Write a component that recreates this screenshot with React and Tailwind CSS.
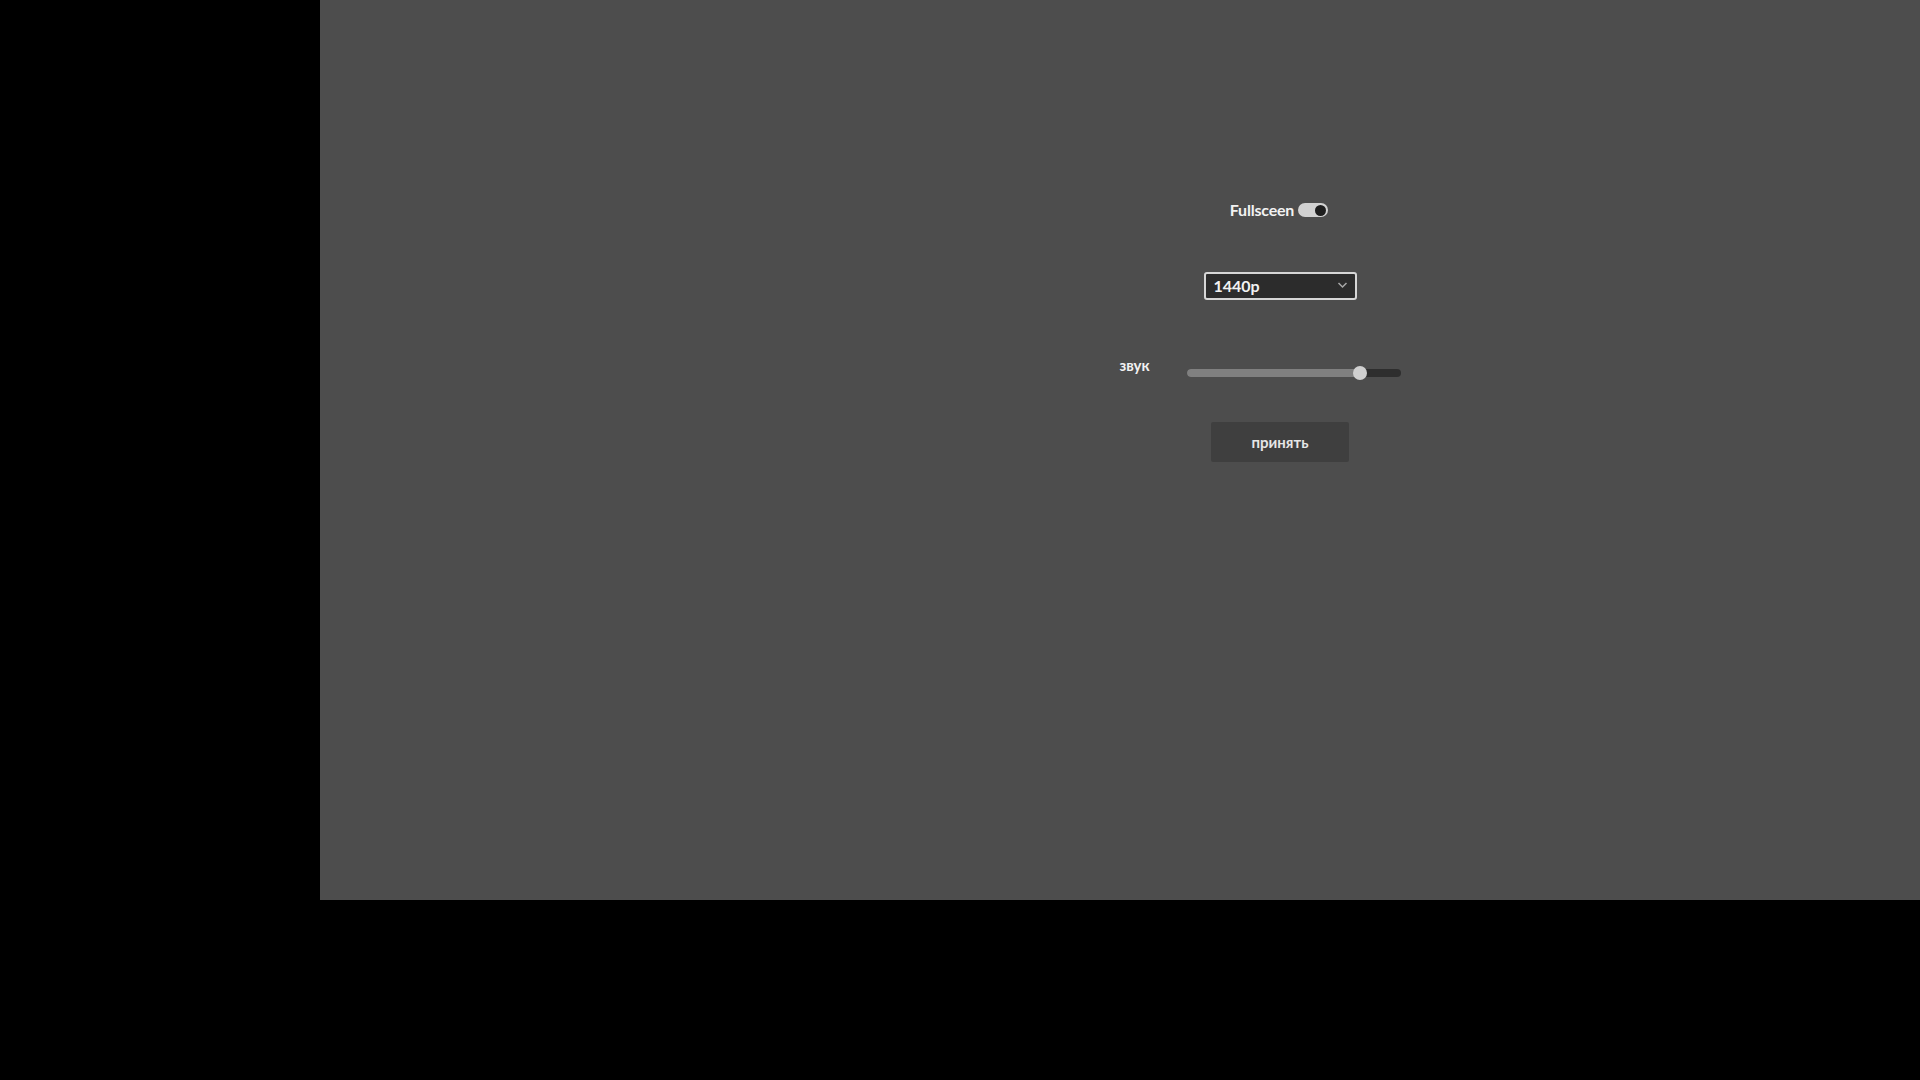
import React, { useState } from "react";

export default function App() {
  const [fullscreen, setFullscreen] = useState(true);
  const [res, setRes] = useState("1440p");
  const [volume, setVolume] = useState(81);

  return (
    <div className="w-[1920px] h-[1080px] bg-black flex items-start overflow-hidden font-['Lato','Noto_Sans',sans-serif]">
      <div className="w-[320px] h-[900px] bg-black shrink-0"></div>
      <div className="flex-1 h-[900px] bg-[#4d4d4d] pl-[320px] pt-[196px]">
        <div className="flex flex-col items-center">
          <div className="flex items-center gap-[4px] h-[28px] mr-[2px]">
            <span className="text-[16px] font-bold text-[#f2f2f2] tracking-[-0.2px]">
              Fullsceen
            </span>
            <button
              onClick={() => setFullscreen(!fullscreen)}
              className="w-[30px] h-[14px] rounded-full bg-[#d2d2d2] flex items-center px-[2px] justify-end"
            >
              <span className="w-[11px] h-[11px] rounded-full bg-[#1e1e1e]"></span>
            </button>
          </div>

          <div className="relative mt-[48px] w-[153px] h-[28px]">
            <select
              value={res}
              onChange={(e) => setRes(e.target.value)}
              className="appearance-none w-full h-full bg-[#2c2c2c] border-2 border-[#d6d6d6] rounded-[3px] pl-[8px] text-[16px] font-bold text-[#f2f2f2] outline-none"
            >
              <option value="1440p">1440p</option>
              <option value="1080p">1080p</option>
              <option value="720p">720p</option>
            </select>
            <svg
              className="absolute right-[9px] top-[9px] pointer-events-none"
              width="11"
              height="8"
              viewBox="0 0 11 8"
              fill="none"
            >
              <path d="M1.5 2 L5.5 6 L9.5 2" stroke="#a8a8a8" strokeWidth="1.5" />
            </svg>
          </div>

          <div className="flex items-center gap-[37px] mt-[69px] mr-[40px]">
            <span className="text-[15px] font-bold text-[#f2f2f2] -mt-[16px]">звук</span>
            <div className="relative w-[214px] h-[8px] rounded-full bg-[#2e2e2e]">
              <div
                className="absolute left-0 top-0 h-full rounded-full bg-[#808080]"
                style={{ width: `${volume}%` }}
              ></div>
              <div
                className="absolute top-[-3px] w-[14px] h-[14px] rounded-full bg-[#d0d0d0] -ml-[7px]"
                style={{ left: `${volume}%` }}
              ></div>
              <input
                type="range"
                min="0"
                max="100"
                value={volume}
                onChange={(e) => setVolume(Number(e.target.value))}
                className="absolute inset-0 w-full h-full opacity-0 cursor-pointer"
              />
            </div>
          </div>

          <button className="mt-[45px] w-[138px] h-[40px] bg-[#3f3f3f] rounded-[2px] text-[15px] font-bold text-[#e6e6e6]">
            принять
          </button>
        </div>
      </div>
    </div>
  );
}
